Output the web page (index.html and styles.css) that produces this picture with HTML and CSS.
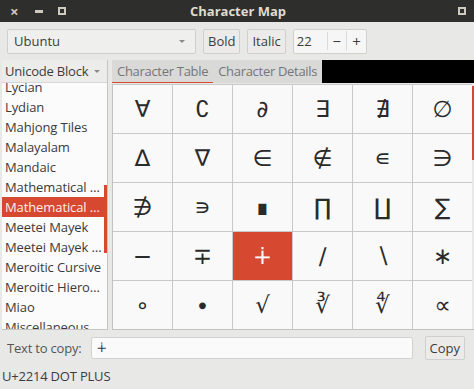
FILE: index.html
```html
<!DOCTYPE html>
<html>
<head>
  <meta charset="UTF-8">
  <title>Character Map</title>
  <link rel="stylesheet" href="styles.css">
</head>
<body>
  <div class="window">
    <div class="titlebar">
      <div class="wm-buttons">
        <span class="wm-close">&times;</span>
        <span class="wm-min"></span>
        <span class="wm-max"></span>
      </div>
      <div class="title">Character Map</div>
      <div class="wm-right"><span class="wm-max"></span></div>
    </div>

    <div class="toolbar">
      <div class="combo">
        <span>Ubuntu</span>
        <span class="arrow"></span>
      </div>
      <div class="btn">Bold</div>
      <div class="btn">Italic</div>
      <div class="spin">
        <span class="spin-value">22</span>
        <span class="spin-btn">&minus;</span>
        <span class="spin-btn">+</span>
      </div>
    </div>

    <div class="main">
      <div class="sidebar">
        <div class="sidebar-head">Unicode Block <span class="arrow"></span></div>
        <div class="block-list">
          <div class="block-items">
            <div class="block">Lycian</div>
            <div class="block">Lydian</div>
            <div class="block">Mahjong Tiles</div>
            <div class="block">Malayalam</div>
            <div class="block">Mandaic</div>
            <div class="block">Mathematical …</div>
            <div class="block selected">Mathematical …</div>
            <div class="block">Meetei Mayek</div>
            <div class="block">Meetei Mayek …</div>
            <div class="block">Meroitic Cursive</div>
            <div class="block">Meroitic Hiero…</div>
            <div class="block">Miao</div>
            <div class="block">Miscellaneous</div>
          </div>
          <div class="list-scroll"></div>
        </div>
      </div>

      <div class="notebook">
        <div class="tabs">
          <div class="tab active">Character Table</div>
          <div class="tab">Character Details</div>
          <div class="tabs-fill"></div>
        </div>
        <div class="table-wrap">
          <div class="char-grid">
            <div class="cell">&#x2200;</div>
            <div class="cell">&#x2201;</div>
            <div class="cell">&#x2202;</div>
            <div class="cell">&#x2203;</div>
            <div class="cell">&#x2204;</div>
            <div class="cell">&#x2205;</div>
            <div class="cell">&#x2206;</div>
            <div class="cell">&#x2207;</div>
            <div class="cell">&#x2208;</div>
            <div class="cell">&#x2209;</div>
            <div class="cell">&#x220A;</div>
            <div class="cell">&#x220B;</div>
            <div class="cell">&#x220C;</div>
            <div class="cell">&#x220D;</div>
            <div class="cell">&#x220E;</div>
            <div class="cell">&#x220F;</div>
            <div class="cell">&#x2210;</div>
            <div class="cell">&#x2211;</div>
            <div class="cell">&#x2212;</div>
            <div class="cell">&#x2213;</div>
            <div class="cell selected">&#x2214;</div>
            <div class="cell">&#x2215;</div>
            <div class="cell">&#x2216;</div>
            <div class="cell">&#x2217;</div>
            <div class="cell">&#x2218;</div>
            <div class="cell">&#x2219;</div>
            <div class="cell">&#x221A;</div>
            <div class="cell">&#x221B;</div>
            <div class="cell">&#x221C;</div>
            <div class="cell">&#x221D;</div>
          </div>
          <div class="table-scroll"></div>
        </div>
      </div>
    </div>

    <div class="copy-row">
      <label>Text to copy:</label>
      <div class="entry">&#x2214;</div>
      <div class="btn copy">Copy</div>
    </div>

    <div class="status">U+2214 DOT PLUS</div>
  </div>
</body>
</html>
```

FILE: styles.css
```css
body {
  margin: 0;
  font-family: "Open Sans", "Noto Sans", sans-serif;
  font-size: 13px;
  color: #3c3c3c;
  background-color: #e8e8e7;
}
.window {
  width: 474px;
  height: 389px;
  overflow: hidden;
  display: flex;
  flex-direction: column;
  background-color: #e8e8e7;
}
.titlebar {
  height: 22px;
  flex: none;
  display: flex;
  align-items: center;
  background-color: #2e2e2c;
  color: #dfdbd2;
  padding: 0 8px 0 10px;
}
.wm-buttons {
  display: flex;
  align-items: center;
  gap: 12px;
  width: 120px;
}
.wm-close {
  font-size: 15px;
  font-weight: bold;
  line-height: 1;
  color: #cfcac0;
  width: 9px;
}
.wm-min {
  width: 8px;
  height: 3px;
  background-color: #cfcac0;
  margin-left: 4px;
}
.wm-max {
  display: block;
  width: 4px;
  height: 4px;
  border: 2px solid #cfcac0;
  margin-left: 3px;
}
.title {
  flex: 1;
  text-align: center;
  font-weight: 700;
  font-size: 13px;
}
.wm-right {
  width: 120px;
  display: flex;
  justify-content: flex-end;
}
.toolbar {
  height: 38px;
  flex: none;
  display: flex;
  align-items: center;
  gap: 7px;
  padding: 0 7px;
  box-sizing: border-box;
}
.combo, .btn, .spin {
  height: 25px;
  box-sizing: border-box;
  border: 1px solid #cfcfce;
  border-radius: 2px;
  background-color: #ecebea;
  display: flex;
  align-items: center;
  flex: none;
}
.combo {
  width: 189px;
  justify-content: space-between;
  padding: 0 10px 0 6px;
  background-color: #efefee;
}
.arrow {
  width: 0;
  height: 0;
  border-left: 3px solid transparent;
  border-right: 3px solid transparent;
  border-top: 3px solid #8a8a8a;
}
.btn {
  padding: 0 4px;
}
.spin {
  width: 74px;
  background-color: #f6f6f6;
}
.spin-value {
  width: 32px;
  padding-left: 3px;
  border-right: 1px solid #dadada;
}
.spin-btn {
  width: 20px;
  text-align: center;
  font-size: 15px;
  border-right: 1px solid #dadada;
}
.spin-btn:last-child {
  border-right: none;
}
.main {
  height: 270px;
  flex: none;
  display: flex;
}
.sidebar {
  width: 105px;
  flex: none;
  margin-left: 2px;
  display: flex;
  flex-direction: column;
  border-right: 1px solid #c4c4c4;
  border-bottom: 1px solid #c4c4c4;
}
.sidebar-head {
  height: 23px;
  flex: none;
  display: flex;
  align-items: center;
  gap: 6px;
  padding-left: 3px;
  font-size: 13px;
  letter-spacing: -0.2px;
  white-space: nowrap;
  background-color: #ececeb;
  border-bottom: 1px solid #d6d6d6;
  box-sizing: border-box;
}
.block-list {
  flex: 1;
  position: relative;
  overflow: hidden;
  background-color: #fbfbfb;
}
.block-items {
  margin-top: -6px;
}
.block {
  height: 20px;
  line-height: 20px;
  padding-left: 3px;
  margin-right: 3px;
  white-space: nowrap;
  color: #3a3a3a;
  letter-spacing: -0.1px;
}
.block.selected {
  background-color: #d6482f;
  color: #fdeee9;
}
.list-scroll {
  position: absolute;
  right: 0;
  top: 102px;
  width: 3px;
  height: 68px;
  background-color: #d6482f;
}
.notebook {
  flex: 1;
  display: flex;
  flex-direction: column;
  margin-left: 4px;
}
.tabs {
  height: 23px;
  flex: none;
  display: flex;
  background-color: #d9d9d8;
}
.tab {
  padding: 0 5px;
  line-height: 22px;
  color: #767676;
  font-size: 13px;
  letter-spacing: -0.3px;
  white-space: nowrap;
  border-bottom: 1px solid transparent;
}
.tab.active {
  border-bottom: 1px solid #d6482f;
}
.tabs-fill {
  flex: 1;
  background-color: #000000;
}
.table-wrap {
  flex: 1;
  display: flex;
  overflow: hidden;
  border-left: 1px solid #c2c2c2;
  border-bottom: 1px solid #c2c2c2;
  margin-top: 1px;
}
.char-grid {
  display: grid;
  grid-template-columns: repeat(6, 59px);
  grid-auto-rows: 48px;
  background-color: #c9c9c9;
  gap: 1px;
  padding-top: 1px;
  align-content: start;
}
.cell {
  display: flex;
  align-items: center;
  justify-content: center;
  background-color: #f9f9f9;
  font-family: "DejaVu Sans", sans-serif;
  font-size: 23px;
  color: #2a2a2a;
}
.cell.selected {
  background-color: #d6482f;
  color: #ffffff;
}
.table-scroll {
  width: 3px;
  height: 74px;
  margin-top: 2px;
  margin-left: auto;
  background-color: #d6482f;
}
.copy-row {
  height: 36px;
  flex: none;
  display: flex;
  align-items: center;
  padding: 0 9px 0 7px;
  gap: 10px;
}
.copy-row label {
  color: #555555;
  white-space: nowrap;
  letter-spacing: -0.2px;
  flex: none;
}
.entry {
  flex: 1;
  height: 22px;
  box-sizing: border-box;
  border: 1px solid #d2d2d2;
  border-radius: 2px;
  background-color: #fafafa;
  font-family: "DejaVu Sans", sans-serif;
  font-size: 13px;
  line-height: 20px;
  padding-left: 4px;
  margin-right: 2px;
}
.btn.copy {
  height: 24px;
}
.status {
  padding-left: 2px;
  color: #3c3c3c;
  height: 23px;
  line-height: 20px;
  letter-spacing: -0.2px;
}
```
